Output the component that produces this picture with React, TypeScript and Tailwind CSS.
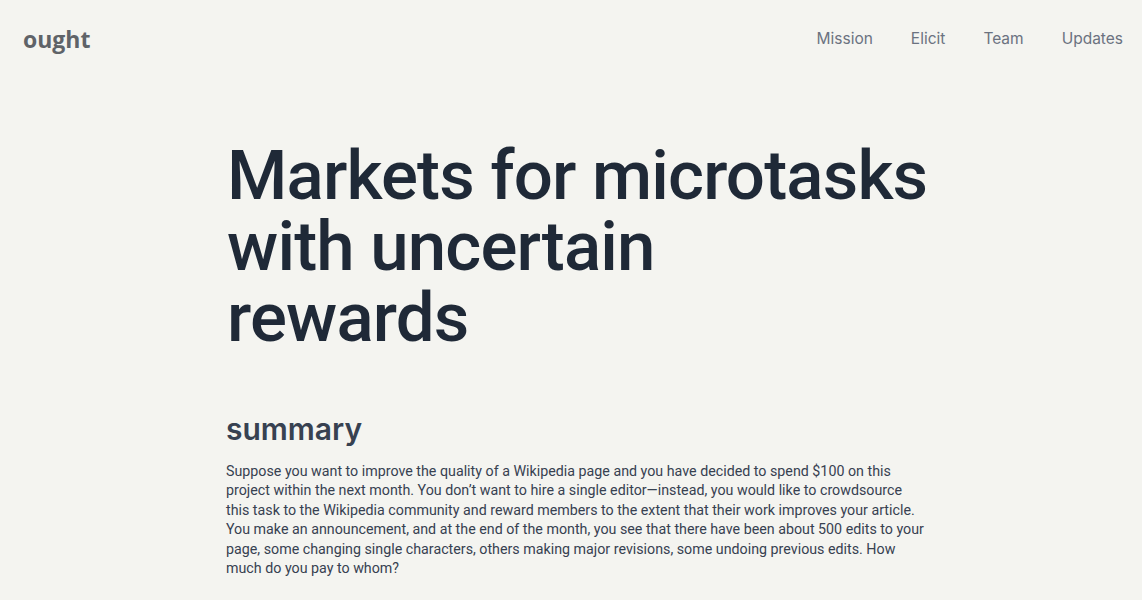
import React from 'react';

const navItems = ['Mission', 'Elicit', 'Team', 'Updates'];

const summaryLines = [
  'Suppose you want to improve the quality of a Wikipedia page and you have decided to spend $100 on this',
  'project within the next month. You don’t want to hire a single editor—instead, you would like to crowdsource',
  'this task to the Wikipedia community and reward members to the extent that their work improves your article.',
  'You make an announcement, and at the end of the month, you see that there have been about 500 edits to your',
  'page, some changing single characters, others making major revisions, some undoing previous edits. How',
  'much do you pay to whom?',
];

export default function App() {
  return (
    <div className="min-h-[600px] w-full bg-[#f4f4f0] font-['Inter',sans-serif]">
      <header className="flex items-center justify-between pl-[23px] pr-[19px] pt-[23px]">
        <div className="font-['Open_Sans',sans-serif] text-[23px] font-bold leading-[32px] text-[#5f6368]">
          ought
        </div>
        <nav className="flex items-center gap-[38px] text-[15.5px] leading-[28px] text-[#6b7280]">
          {navItems.map((item) => (
            <a key={item} href="#" className="hover:text-gray-800">
              {item}
            </a>
          ))}
        </nav>
      </header>

      <main className="ml-[226px] w-[740px] pt-[85px]">
        <h1 className="ml-[1px] font-['Roboto',sans-serif] text-[69px] font-medium leading-[71px] tracking-[-0.012em] text-[#1f2937]">
          Markets for microtasks
          <br />
          with uncertain
          <br />
          rewards
        </h1>

        <h2 className="mt-[56px] text-[30px] font-semibold leading-[40px] text-[#374151]">summary</h2>

        <p className="mt-[13px] font-['Roboto',sans-serif] text-[14.25px] leading-[19.4px] text-[#374151]">
          {summaryLines.map((line, i) => (
            <React.Fragment key={i}>
              {line}
              {i < summaryLines.length - 1 && <br />}
            </React.Fragment>
          ))}
        </p>
      </main>
    </div>
  );
}
